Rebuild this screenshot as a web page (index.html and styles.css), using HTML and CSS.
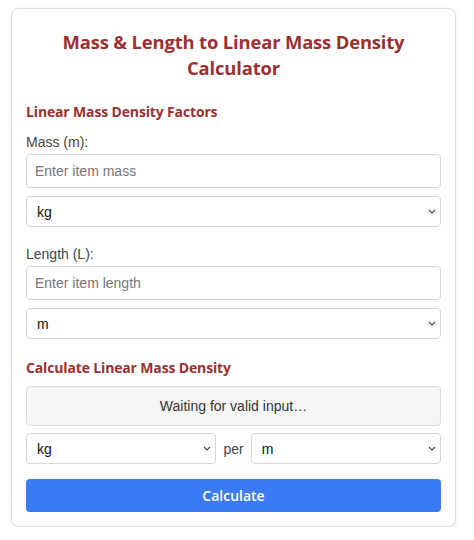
FILE: index.html
```html
<!DOCTYPE html>
<html lang="en">
<head>
<meta charset="utf-8">
<title>Mass &amp; Length to Linear Mass Density Calculator</title>
<link rel="stylesheet" href="styles.css">
</head>
<body>
<div class="card">
  <h1 class="title">Mass &amp; Length to Linear Mass Density Calculator</h1>
  <h2 class="section">Linear Mass Density Factors</h2>
  <div class="field">
    <label class="label" for="mass">Mass (m):</label>
    <input class="input" id="mass" type="text" placeholder="Enter item mass">
    <select class="select">
      <option>kg</option>
    </select>
  </div>
  <div class="field">
    <label class="label" for="length">Length (L):</label>
    <input class="input" id="length" type="text" placeholder="Enter item length">
    <select class="select">
      <option>m</option>
    </select>
  </div>
  <h2 class="section section-calc">Calculate Linear Mass Density</h2>
  <div class="result">Waiting for valid input…</div>
  <div class="unit-row">
    <select class="select unit">
      <option>kg</option>
    </select>
    <span class="per">per</span>
    <select class="select unit">
      <option>m</option>
    </select>
  </div>
  <button class="button" type="button">Calculate</button>
</div>
</body>
</html>
```
FILE: styles.css
```css
html, body {
  margin: 0;
  padding: 0;
  background: #ffffff;
}
body {
  font-family: "Liberation Sans", Arial, sans-serif;
  font-size: 14px;
  color: #333333;
  padding-top: 8px;
  padding-left: 11px;
}
.card {
  box-sizing: border-box;
  width: 445px;
  border: 1px solid #dcdcdc;
  border-radius: 8px;
  box-shadow: 0 2px 6px rgba(0, 0, 0, 0.08);
  padding: 14px 14px 14px;
  background: #ffffff;
}
.title {
  font-family: "Open Sans", sans-serif;
  font-weight: 700;
  font-size: 18.4px;
  letter-spacing: -0.15px;
  line-height: 26px;
  color: #9b3030;
  text-align: center;
  margin: 6px 0 0;
}
.section {
  font-family: "Open Sans", sans-serif;
  font-weight: 700;
  font-size: 14px;
  letter-spacing: -0.15px;
  line-height: 24px;
  color: #9b3030;
  margin: 19px 0 10px;
}
.section-calc {
  margin: 18px 0 6px;
}
.field {
  display: flex;
  flex-direction: column;
  margin-bottom: 19px;
}
.field + .section {
  margin-top: -2px;
}
.label {
  display: block;
  line-height: 16px;
  color: #444444;
  margin-bottom: 4px;
}
.input {
  box-sizing: border-box;
  height: 34px;
  padding: 0 8px;
  border: 1px solid #d6d6d6;
  border-radius: 4px;
  font-family: "Liberation Sans", Arial, sans-serif;
  font-size: 14px;
  color: #333;
  margin: 0 0 8px;
  outline: none;
}
.input::placeholder {
  color: #777777;
}
.select {
  box-sizing: border-box;
  height: 31px;
  padding: 0 24px 0 10px;
  border: 1px solid #d6d6d6;
  border-radius: 4px;
  -webkit-appearance: none;
  appearance: none;
  background-color: #ffffff;
  background-image: url("data:image/svg+xml,%3Csvg xmlns='http://www.w3.org/2000/svg' width='8' height='5' viewBox='0 0 8 5'%3E%3Cpath d='M1 1 L4 4 L7 1' fill='none' stroke='%23444' stroke-width='1.1'/%3E%3C/svg%3E");
  background-repeat: no-repeat;
  background-position: right 4px center;
  background-size: 8px 5px;
  font-family: "Liberation Sans", Arial, sans-serif;
  font-size: 14px;
  color: #111111;
  margin: 0;
}
.result {
  box-sizing: border-box;
  height: 40px;
  display: flex;
  align-items: center;
  justify-content: center;
  background: #f6f6f6;
  border: 1px solid #dcdcdc;
  border-radius: 4px;
  color: #333333;
}
.unit-row {
  display: flex;
  align-items: center;
  gap: 7px;
  margin-top: 7px;
}
.unit {
  flex: 1;
  min-width: 0;
}
.per {
  color: #444444;
}
.button {
  display: block;
  box-sizing: border-box;
  width: 100%;
  height: 33px;
  margin-top: 15px;
  border: none;
  border-radius: 4px;
  background: #3b7bf5;
  color: #ffffff;
  font-family: "Open Sans", sans-serif;
  font-weight: 600;
  font-size: 14px;
  cursor: pointer;
}
```
